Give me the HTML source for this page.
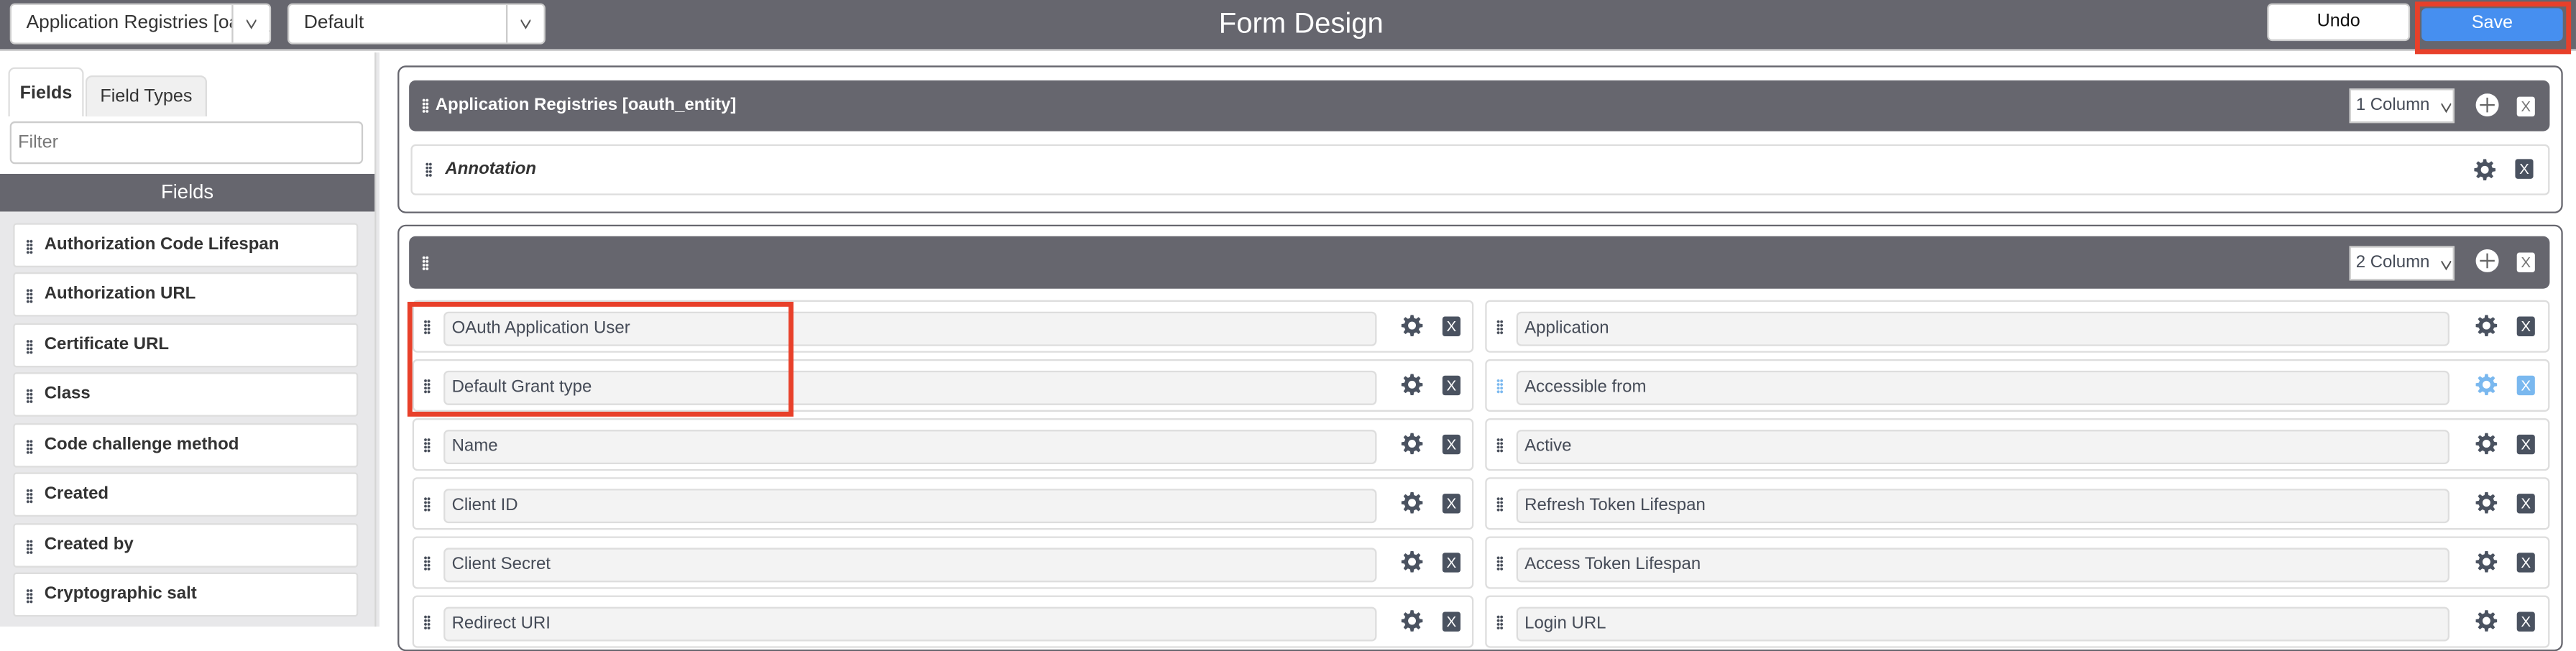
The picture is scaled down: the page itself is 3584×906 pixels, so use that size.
<!DOCTYPE html>
<html><head><meta charset="utf-8">
<style>
*{box-sizing:border-box;margin:0;padding:0}
html,body{width:3584px;height:872px;overflow:hidden;background:#fff}
#w{position:absolute;left:0;top:0;width:1568px;height:382px;transform:scale(2.2857,2.2827);transform-origin:0 0;font-family:"Liberation Sans",Arial,sans-serif;color:#454b57}
.a{position:absolute}
.hdr{left:0;top:0;width:1568px;height:31px;background:#66666e;border-bottom:1.5px solid #d8d8d8}
.sel{background:#fff;border:1px solid #ccc;border-radius:3px;height:25px;font-size:11.5px;color:#333;line-height:23px;padding-left:9px;overflow:hidden;white-space:nowrap}
.sel .cov{position:absolute;top:0;bottom:0;right:0;width:23px;background:#fff;border-left:1px solid #ccc}
.chev{position:absolute}
.tab{font-size:11px;font-weight:bold;color:#333;border:1px solid #ddd;border-bottom:none;border-radius:4px 4px 0 0;text-align:center}
.item{position:absolute;left:8px;width:210px;height:27px;background:#fff;border:1px solid #ddd;border-radius:2px;font-size:10.5px;font-weight:bold;color:#333;line-height:25px;padding-left:18px}
.dots{position:absolute;width:4px;height:9px;color:#454b57;background:radial-gradient(circle,currentColor 0.75px,transparent 0.95px) 0 0/2px 2.25px}
.panel{border:1.5px solid #66666e;border-radius:5px;background:#fff}
.bar{background:#66666e;border-radius:4px}
.row{position:absolute;height:32px;border:1px solid #ddd;border-radius:3px;background:#fff}
.inp{position:absolute;top:6px;height:21px;background:#f3f3f3;border:1px solid #ddd;border-radius:3px;font-size:10.5px;line-height:19px;padding-left:4px;color:#454b57}
.xb{position:absolute;width:11px;height:12px;background:#4a5260;border-radius:1.5px;color:#fff;font-size:9px;line-height:12px;text-align:center}
.xw{position:absolute;width:11px;height:12px;background:#fff;border-radius:1.5px;color:#777;font-size:9px;line-height:12px;text-align:center}
.pl{position:absolute;width:14px;height:14px;border-radius:50%;background:#fff}
.colsel{position:absolute;width:64px;height:21px;background:#fff;border:1px solid #ccc;font-size:10.5px;line-height:19px;padding-left:3px;color:#454b57;white-space:nowrap}
.red{position:absolute;border:3.5px solid #e8402a}
</style></head><body><div id="w">
<svg width="0" height="0" style="position:absolute"><defs>
<g id="gear"><path d="M5.2 0h1.6l.3 1.7 1.2.5 1.4-1 1.1 1.1-1 1.4.5 1.2 1.7.3v1.6l-1.7.3-.5 1.2 1 1.4-1.1 1.1-1.4-1-1.2.5-.3 1.7H5.2l-.3-1.7-1.2-.5-1.4 1-1.1-1.1 1-1.4-.5-1.2L0 6.8V5.2l1.7-.3.5-1.2-1-1.4 1.1-1.1 1.4 1 1.2-.5z M6 3.8a2.2 2.2 0 1 0 0 4.4a2.2 2.2 0 1 0 0-4.4z" fill-rule="evenodd"/></g>
<g id="chv"><polyline points="0,0 3,5 6,0" fill="none" stroke="#555" stroke-width="0.9"/></g>
<g id="plus"><circle cx="7" cy="7" r="7" fill="#fff"/><path d="M7 2.5v9M2.5 7h9" stroke="#666" stroke-width="1"/></g>
</defs></svg>

<div class="a hdr"></div>
<div class="a sel" style="left:6px;top:2px;width:159px">Application Registries [oauth_entity]<div class="cov"><svg class="chev" style="left:8px;top:9px" width="6" height="6"><use href="#chv"/></svg></div></div>
<div class="a sel" style="left:175px;top:2px;width:157px">Default<div class="cov"><svg class="chev" style="left:8px;top:9px" width="6" height="6"><use href="#chv"/></svg></div></div>
<div class="a" style="left:692px;top:4px;width:200px;text-align:center;color:#fff;font-size:17.5px">Form Design</div>
<div class="a" style="left:1380px;top:2px;width:87px;height:23px;background:#fff;border:1px solid #ccc;border-radius:3px;font-size:11px;color:#111;text-align:center;line-height:21px">Undo</div>
<div class="a" style="left:1474px;top:5px;width:86px;height:20px;background:#468ff0;border-radius:3px;font-size:11px;color:#fff;text-align:center;line-height:18px">Save</div>
<div class="red" style="left:1470px;top:1px;width:95px;height:32px"></div>

<!-- sidebar -->
<div class="a" style="left:228px;top:32px;width:3px;height:350px;background:#e8e8ea;border-left:1px solid #d5d5d5"></div>
<div class="a tab" style="left:5px;top:41px;width:46px;height:30px;line-height:30px;background:#fff">Fields</div>
<div class="a tab" style="left:52px;top:46px;width:74px;height:25px;line-height:24px;background:#f0f0f0;font-weight:normal">Field Types</div>
<div class="a" style="left:6px;top:74px;width:215px;height:26px;border:1px solid #ccc;border-radius:3px;font-size:11px;color:#777;line-height:24px;padding-left:4px">Filter</div>
<div class="a" style="left:0;top:106px;width:228px;height:23px;background:#66666e;color:#fff;text-align:center;font-size:12px;line-height:22px">Fields</div>
<div class="a" style="left:0;top:129px;width:228px;height:253px;background:#e8e8ea"></div>
<div class="item" style="top:136px"><div class="dots" style="left:7px;top:9px"></div>Authorization Code Lifespan</div>
<div class="item" style="top:166px"><div class="dots" style="left:7px;top:9px"></div>Authorization URL</div>
<div class="item" style="top:197px"><div class="dots" style="left:7px;top:9px"></div>Certificate URL</div>
<div class="item" style="top:227px"><div class="dots" style="left:7px;top:9px"></div>Class</div>
<div class="item" style="top:258px"><div class="dots" style="left:7px;top:9px"></div>Code challenge method</div>
<div class="item" style="top:288px"><div class="dots" style="left:7px;top:9px"></div>Created</div>
<div class="item" style="top:319px"><div class="dots" style="left:7px;top:9px"></div>Created by</div>
<div class="item" style="top:349px"><div class="dots" style="left:7px;top:9px"></div>Cryptographic salt</div>

<!-- section 1 -->
<div class="a panel" style="left:242px;top:40px;width:1318px;height:90px"></div>
<div class="a bar" style="left:249px;top:49px;width:1303px;height:31px"></div>
<div class="dots" style="left:257px;top:60px;color:#fff"></div>
<div class="a" style="left:265px;top:58px;color:#fff;font-size:10.5px;font-weight:bold">Application Registries [oauth_entity]</div>
<div class="colsel" style="left:1430px;top:54px">1 Column<svg class="chev" style="left:55px;top:8px" width="6" height="6"><use href="#chv"/></svg></div>
<svg class="a" style="left:1507px;top:57px" width="14" height="14"><use href="#plus"/></svg>
<div class="xw" style="left:1532px;top:59px">X</div>
<div class="row" style="left:250px;top:88px;width:1302px;height:31px"></div>
<div class="dots" style="left:259px;top:99px"></div>
<div class="a" style="left:271px;top:97px;font-size:10.5px;font-weight:bold;font-style:italic;color:#333">Annotation</div>
<svg class="a" style="left:1506px;top:97px" width="13" height="13" viewBox="0 0 12 12" fill="#4a5260"><use href="#gear"/></svg>
<div class="xb" style="left:1531px;top:97px">X</div>

<!-- section 2 -->
<div class="a panel" style="left:242px;top:137px;width:1318px;height:260px"></div>
<div class="a bar" style="left:249px;top:144px;width:1303px;height:32px"></div>
<div class="dots" style="left:257px;top:156px;color:#fff"></div>
<div class="colsel" style="left:1430px;top:150px">2 Column<svg class="chev" style="left:55px;top:8px" width="6" height="6"><use href="#chv"/></svg></div>
<svg class="a" style="left:1507px;top:152px" width="14" height="14"><use href="#plus"/></svg>
<div class="xw" style="left:1532px;top:154px">X</div>

<div class="row" style="left:251px;top:183px;width:646px"><div class="dots" style="left:6px;top:11px"></div><div class="inp" style="left:18px;width:568px">OAuth Application User</div><svg class="a" style="left:601px;top:8px" width="13" height="13" viewBox="0 0 12 12" fill="#4a5260"><use href="#gear"/></svg><div class="xb" style="left:626px;top:9px">X</div></div>
<div class="row" style="left:251px;top:219px;width:646px"><div class="dots" style="left:6px;top:11px"></div><div class="inp" style="left:18px;width:568px">Default Grant type</div><svg class="a" style="left:601px;top:8px" width="13" height="13" viewBox="0 0 12 12" fill="#4a5260"><use href="#gear"/></svg><div class="xb" style="left:626px;top:9px">X</div></div>
<div class="row" style="left:251px;top:255px;width:646px"><div class="dots" style="left:6px;top:11px"></div><div class="inp" style="left:18px;width:568px">Name</div><svg class="a" style="left:601px;top:8px" width="13" height="13" viewBox="0 0 12 12" fill="#4a5260"><use href="#gear"/></svg><div class="xb" style="left:626px;top:9px">X</div></div>
<div class="row" style="left:251px;top:291px;width:646px"><div class="dots" style="left:6px;top:11px"></div><div class="inp" style="left:18px;width:568px">Client ID</div><svg class="a" style="left:601px;top:8px" width="13" height="13" viewBox="0 0 12 12" fill="#4a5260"><use href="#gear"/></svg><div class="xb" style="left:626px;top:9px">X</div></div>
<div class="row" style="left:251px;top:327px;width:646px"><div class="dots" style="left:6px;top:11px"></div><div class="inp" style="left:18px;width:568px">Client Secret</div><svg class="a" style="left:601px;top:8px" width="13" height="13" viewBox="0 0 12 12" fill="#4a5260"><use href="#gear"/></svg><div class="xb" style="left:626px;top:9px">X</div></div>
<div class="row" style="left:251px;top:363px;width:646px"><div class="dots" style="left:6px;top:11px"></div><div class="inp" style="left:18px;width:568px">Redirect URI</div><svg class="a" style="left:601px;top:8px" width="13" height="13" viewBox="0 0 12 12" fill="#4a5260"><use href="#gear"/></svg><div class="xb" style="left:626px;top:9px">X</div></div>

<div class="row" style="left:904px;top:183px;width:648px"><div class="dots" style="left:6px;top:11px"></div><div class="inp" style="left:18px;width:568px">Application</div><svg class="a" style="left:602px;top:8px" width="13" height="13" viewBox="0 0 12 12" fill="#4a5260"><use href="#gear"/></svg><div class="xb" style="left:627px;top:9px">X</div></div>
<div class="row" style="left:904px;top:219px;width:648px"><div class="dots" style="left:6px;top:11px;color:#7ab8ef"></div><div class="inp" style="left:18px;width:568px">Accessible from</div><svg class="a" style="left:602px;top:8px" width="13" height="13" viewBox="0 0 12 12" fill="#7ab8ef"><use href="#gear"/></svg><div class="xb" style="left:627px;top:9px;background:#7ab8ef">X</div></div>
<div class="row" style="left:904px;top:255px;width:648px"><div class="dots" style="left:6px;top:11px"></div><div class="inp" style="left:18px;width:568px">Active</div><svg class="a" style="left:602px;top:8px" width="13" height="13" viewBox="0 0 12 12" fill="#4a5260"><use href="#gear"/></svg><div class="xb" style="left:627px;top:9px">X</div></div>
<div class="row" style="left:904px;top:291px;width:648px"><div class="dots" style="left:6px;top:11px"></div><div class="inp" style="left:18px;width:568px">Refresh Token Lifespan</div><svg class="a" style="left:602px;top:8px" width="13" height="13" viewBox="0 0 12 12" fill="#4a5260"><use href="#gear"/></svg><div class="xb" style="left:627px;top:9px">X</div></div>
<div class="row" style="left:904px;top:327px;width:648px"><div class="dots" style="left:6px;top:11px"></div><div class="inp" style="left:18px;width:568px">Access Token Lifespan</div><svg class="a" style="left:602px;top:8px" width="13" height="13" viewBox="0 0 12 12" fill="#4a5260"><use href="#gear"/></svg><div class="xb" style="left:627px;top:9px">X</div></div>
<div class="row" style="left:904px;top:363px;width:648px"><div class="dots" style="left:6px;top:11px"></div><div class="inp" style="left:18px;width:568px">Login URL</div><svg class="a" style="left:602px;top:8px" width="13" height="13" viewBox="0 0 12 12" fill="#4a5260"><use href="#gear"/></svg><div class="xb" style="left:627px;top:9px">X</div></div>

<div class="red" style="left:248px;top:184px;width:235px;height:70px"></div>
</div></body></html>
